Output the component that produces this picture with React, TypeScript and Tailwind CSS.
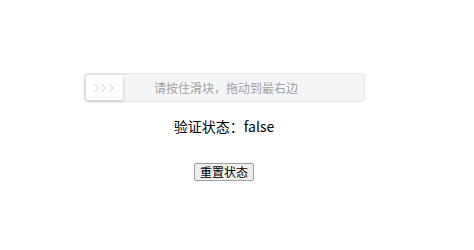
import { useState } from "react";

export default function App() {
  const [verified, setVerified] = useState(false);

  return (
    <div
      className="w-[448px] pt-[73px] flex flex-col items-center"
      style={{ fontFamily: '"Noto Sans CJK SC", "Liberation Sans", sans-serif' }}
    >
      <div className="relative w-[281px] h-[29px] rounded-[4px] border border-[#e3e4e6] bg-[#f4f5f7] flex items-center justify-center">
        <div className="absolute left-[1px] top-[1px] bottom-[1px] w-[37px] rounded-[3px] bg-white shadow-[0_1px_4px_rgba(0,0,0,0.18)] flex items-center justify-center">
          <svg width="23" height="10" viewBox="0 0 23 10" fill="none" stroke="#cdcdcd" strokeWidth="1">
            <path d="M1 1l4 4-4 4" />
            <path d="M8.5 1l4 4-4 4" />
            <path d="M16 1l4 4-4 4" />
          </svg>
        </div>
        <span className="pl-[4px] text-[12px] leading-none text-[#a3a3a3]">请按住滑块，拖动到最右边</span>
      </div>
      <div className="mt-[14px] text-[14px] leading-[20px] text-black">
        验证状态：{verified ? "true" : "false"}
      </div>
      <button
        onClick={() => setVerified(false)}
        className="mt-[27px] h-[18px] px-[5px] text-[12px] leading-none text-black bg-[#efefef] border border-[#a0a0a0] rounded-[2px] flex items-center"
      >
        重置状态
      </button>
    </div>
  );
}
